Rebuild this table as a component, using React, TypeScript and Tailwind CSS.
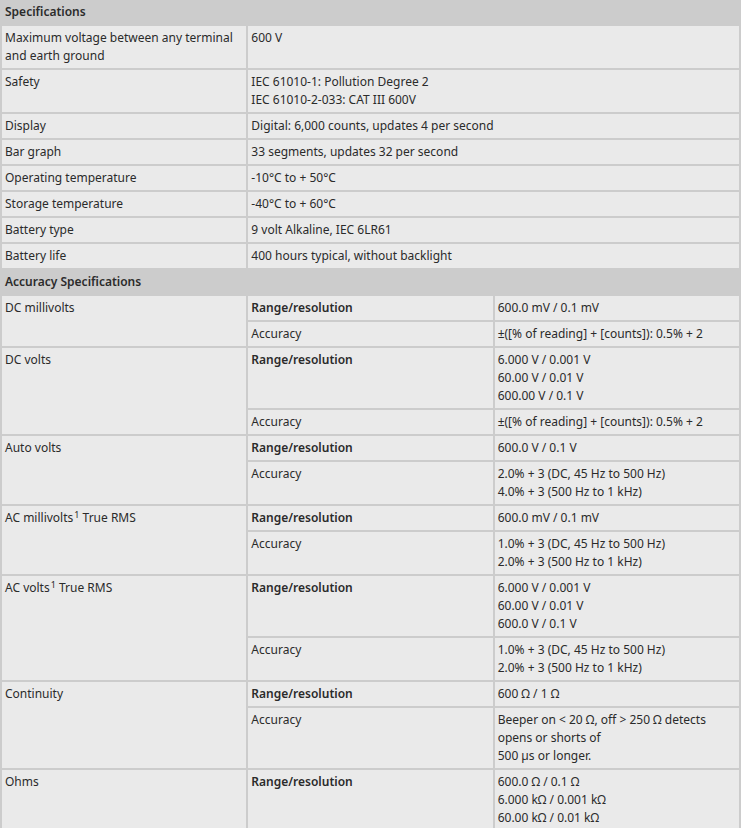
import type { ReactNode } from "react";

type Row = { label: ReactNode; value: ReactNode[] };

const general: Row[] = [
  {
    label: (
      <>
        Maximum voltage between any terminal
        <br />
        and earth ground
      </>
    ),
    value: ["600 V"],
  },
  { label: "Safety", value: ["IEC 61010-1: Pollution Degree 2", "IEC 61010-2-033: CAT III 600V"] },
  { label: "Display", value: ["Digital: 6,000 counts, updates 4 per second"] },
  { label: "Bar graph", value: ["33 segments, updates 32 per second"] },
  { label: "Operating temperature", value: ["-10°C to + 50°C"] },
  { label: "Storage temperature", value: ["-40°C to + 60°C"] },
  { label: "Battery type", value: ["9 volt Alkaline, IEC 6LR61"] },
  { label: "Battery life", value: ["400 hours typical, without backlight"] },
];

type Spec = { label: ReactNode; range: string[]; accuracy?: string[] };

const Sup = () => <sup className="text-[9px] leading-none ml-[1px] -top-[0.4em]">1</sup>;

const accuracy: Spec[] = [
  {
    label: "DC millivolts",
    range: ["600.0 mV / 0.1 mV"],
    accuracy: ["±([% of reading] + [counts]): 0.5% + 2"],
  },
  {
    label: "DC volts",
    range: ["6.000 V / 0.001 V", "60.00 V / 0.01 V", "600.00 V / 0.1 V"],
    accuracy: ["±([% of reading] + [counts]): 0.5% + 2"],
  },
  {
    label: "Auto volts",
    range: ["600.0 V / 0.1 V"],
    accuracy: ["2.0% + 3 (DC, 45 Hz to 500 Hz)", "4.0% + 3 (500 Hz to 1 kHz)"],
  },
  {
    label: (
      <>
        AC millivolts<Sup /> True RMS
      </>
    ),
    range: ["600.0 mV / 0.1 mV"],
    accuracy: ["1.0% + 3 (DC, 45 Hz to 500 Hz)", "2.0% + 3 (500 Hz to 1 kHz)"],
  },
  {
    label: (
      <>
        AC volts<Sup /> True RMS
      </>
    ),
    range: ["6.000 V / 0.001 V", "60.00 V / 0.01 V", "600.0 V / 0.1 V"],
    accuracy: ["1.0% + 3 (DC, 45 Hz to 500 Hz)", "2.0% + 3 (500 Hz to 1 kHz)"],
  },
  {
    label: "Continuity",
    range: ["600 Ω / 1 Ω"],
    accuracy: ["Beeper on < 20 Ω, off > 250 Ω detects", "opens or shorts of", "500 µs or longer."],
  },
  {
    label: "Ohms",
    range: ["600.0 Ω / 0.1 Ω", "6.000 kΩ / 0.001 kΩ", "60.00 kΩ / 0.01 kΩ"],
    accuracy: ["1.0% + 3"],
  },
];

const cell = "bg-[#eaeaea] align-top px-[3px] py-[3px]";

const Lines = ({ items }: { items: ReactNode[] }) => (
  <>
    {items.map((t, i) => (
      <div key={i}>{t}</div>
    ))}
  </>
);

const SectionHeader = ({ title }: { title: string }) => (
  <tr>
    <th colSpan={3} className="bg-[#cccccc] text-left font-semibold px-[3px] py-[3px]">
      {title}
    </th>
  </tr>
);

export default function App() {
  return (
    <div className="w-[741px] h-[828px] overflow-hidden bg-white">
      <table
        className="w-full table-fixed border-separate border-spacing-[2px] bg-[#cccccc] -mt-[2px] text-[12px] leading-[18px] text-[#2b2b2b]"
        style={{ fontFamily: '"Noto Sans", "Open Sans", sans-serif' }}
      >
        <tbody>
          <SectionHeader title="Specifications" />
          {general.map((r, i) => (
            <tr key={i}>
              <td className={cell}>{r.label}</td>
              <td colSpan={2} className={cell}>
                <Lines items={r.value} />
              </td>
            </tr>
          ))}
          <SectionHeader title="Accuracy Specifications" />
          {accuracy.map((s, i) => [
            <tr key={`r${i}`}>
              <td rowSpan={s.accuracy ? 2 : 1} className={cell}>
                {s.label}
              </td>
              <td className={`${cell} font-semibold`}>Range/resolution</td>
              <td className={cell}>
                <Lines items={s.range} />
              </td>
            </tr>,
            s.accuracy ? (
              <tr key={`a${i}`}>
                <td className={cell}>Accuracy</td>
                <td className={cell}>
                  <Lines items={s.accuracy} />
                </td>
              </tr>
            ) : null,
          ])}
        </tbody>
      </table>
    </div>
  );
}
